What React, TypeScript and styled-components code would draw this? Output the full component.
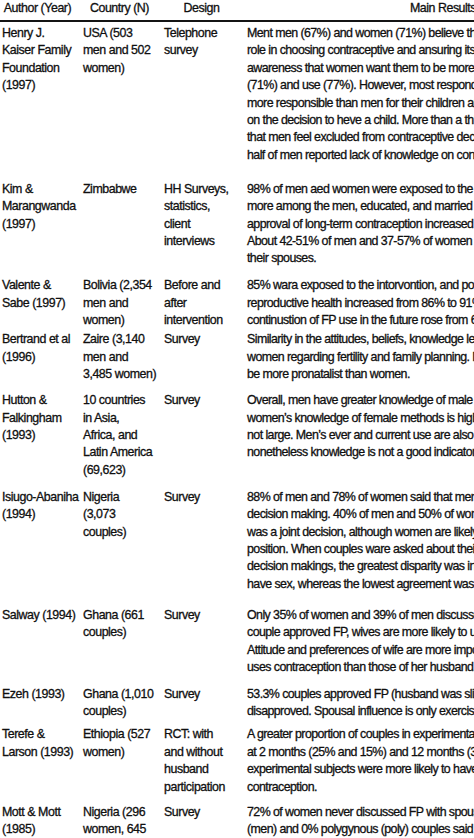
import React from 'react';
import styled, { createGlobalStyle } from 'styled-components';

const GlobalStyle = createGlobalStyle`
  html, body {
    margin: 0;
    padding: 0;
    background: #ffffff;
    overflow: hidden;
  }
  body {
    width: 474px;
    height: 838px;
    font-family: "Liberation Sans", Arial, sans-serif;
    color: #0f0f0f;
  }
`;

const COLUMNS = '83px 81px 83px 400px';

const Page = styled.div`
  width: 474px;
  height: 838px;
  overflow: hidden;
`;

const Table = styled.div`
  width: 647px;
  font-size: 12.4px;
  letter-spacing: -0.45px;
  line-height: 17.4px;
  -webkit-text-stroke: 0.3px #111111;
`;

const HeaderRow = styled.div`
  display: grid;
  grid-template-columns: ${COLUMNS};
  height: 20px;
  border-bottom: 2px solid #141414;
`;

const HeadCell = styled.div`
  padding-right: 8px;
  text-align: center;
  white-space: nowrap;
`;

const Row = styled.div<{ $after: number }>`
  display: grid;
  grid-template-columns: ${COLUMNS};
  padding-bottom: ${p => p.$after}px;
`;

const Body = styled.div`
  padding-top: 3px;
`;

const Cell = styled.div<{ $first?: boolean; $results?: boolean }>`
  padding-left: ${p => (p.$first ? '2px' : '0')};
  letter-spacing: ${p => (p.$results ? '-0.57px' : 'inherit')};
  display: flex;
  flex-direction: column;
`;

const Line = styled.div`
  white-space: nowrap;
`;

interface Study {
  author: string[];
  country: string[];
  design: string[];
  results: string[];
  after: number;
}

const studies: Study[] = [
  {
    author: ['Henry J.', 'Kaiser Family', 'Foundation', '(1997)'],
    country: ['USA (503', 'men and 502', 'women)'],
    design: ['Telephone', 'survey'],
    results: [
      'Ment men (67%) and women (71%) believe the man should play an important',
      'role in choosing contraceptive and ansuring its use. There is a high',
      'awareness that women want them to be more involved in decision making',
      '(71%) and use (77%). However, most respondents believe that women are',
      'more responsible than men for their children and should have final say',
      'on the decision to heve a child. More than a third of respondents believe',
      'that men feel excluded from contraceptive decisions. More than',
      'half of men reported lack of knowledge on contraceptive methods.',
    ],
    after: 16.6,
  },
  {
    author: ['Kim &', 'Marangwanda', '(1997)'],
    country: ['Zimbabwe'],
    design: ['HH Surveys,', 'statistics,', 'client', 'interviews'],
    results: [
      '98% of men aed women were exposed to the campaign; exposure was',
      'more among the men, educated, and married respondents. Men\u2019s',
      'approval of long-term contraception increased after the campaign.',
      'About 42-51% of men and 37-57% of women discussed FP with',
      'their spouses.',
    ],
    after: 9.6,
  },
  {
    author: ['Valente &', 'Sabe (1997)'],
    country: ['Bolivia (2,354', 'men and', 'women)'],
    design: ['Before and', 'after', 'intervention'],
    results: [
      '85% wara exposed to the intorvontion, and positive attitudes toward',
      'reproductive health increased from 86% to 91%. Intention of',
      'continustion of FP use in the future rose from 60% to 70%.',
    ],
    after: 1.6,
  },
  {
    author: ['Bertrand et al', '(1996)'],
    country: ['Zaire (3,140', 'men and', '3,485 women)'],
    design: ['Survey'],
    results: [
      'Similarity in the attitudes, beliefs, knowledge levels of men and',
      'women regarding fertility and family planning. Men tend to',
      'be more pronatalist than women.',
    ],
    after: 8.6,
  },
  {
    author: ['Hutton &', 'Falkingham', '(1993)'],
    country: ['10 countries', 'in Asia,', 'Africa, and', 'Latin America', '(69,623)'],
    design: ['Survey'],
    results: [
      'Overall, men have greater knowledge of male methods, while',
      'women\u2019s knowledge of female methods is higher; the gap is',
      'not large. Men\u2019s ever and current use are also related to knowledge;',
      'nonetheless knowledge is not a good indicator of use.',
    ],
    after: 9.6,
  },
  {
    author: ['Isiugo-Abaniha', '(1994)'],
    country: ['Nigeria', '(3,073', 'couples)'],
    design: ['Survey'],
    results: [
      '88% of men and 78% of women said that men dominate in reproductive',
      'decision making. 40% of men and 50% of women said that FP use',
      'was a joint decision, although women are likely to be in a weaker',
      'position. When couples ware asked about their roles in reproductive',
      'decision makings, the greatest disparity was in the decision to',
      'have sex, whereas the lowest agreement was on family size.',
    ],
    after: 13.6,
  },
  {
    author: ['Salway (1994)'],
    country: ['Ghana (661', 'couples)'],
    design: ['Survey'],
    results: [
      'Only 35% of women and 39% of men discussed FP. Where the',
      'couple approved FP, wives are more likely to use contraception.',
      'Attitude and preferences of wife are more important in whether she',
      'uses contraception than those of her husband.',
    ],
    after: 9.6,
  },
  {
    author: ['Ezeh (1993)'],
    country: ['Ghana (1,010', 'couples)'],
    design: ['Survey'],
    results: [
      '53.3% couples approved FP (husband was slightly more likely to have',
      'disapproved. Spousal influence is only exercised by the husband.',
    ],
    after: 5.6,
  },
  {
    author: ['Terefe &', 'Larson (1993)'],
    country: ['Ethiopia (527', 'women)'],
    design: ['RCT: with', 'and without', 'husband', 'participation'],
    results: [
      'A greater proportion of couples in experimental group used FP',
      'at 2 months (25% and 15%) and 12 months (33% and 26%), and',
      'experimental subjects were more likely to have continued using',
      'contraception.',
    ],
    after: 7.6,
  },
  {
    author: ['Mott & Mott', '(1985)'],
    country: ['Nigeria (296', 'women, 645', 'men)'],
    design: ['Survey'],
    results: [
      '72% of women never discussed FP with spouse; 44% monogamous',
      '(men) and 0% polygynous (poly) couples said they had discussed',
      'family size with their spouses.',
    ],
    after: 9,
  },
];

const renderLines = (lines: string[]) =>
  lines.map((l, i) => <Line key={i}>{l}</Line>);

export default function App() {
  return (
    <Page>
      <GlobalStyle />
      <Table>
        <HeaderRow>
          <HeadCell>Author (Year)</HeadCell>
          <HeadCell>Country (N)</HeadCell>
          <HeadCell>Design</HeadCell>
          <HeadCell>Main Results</HeadCell>
        </HeaderRow>
        <Body>
          {studies.map(s => (
            <Row key={s.author.join(' ')} $after={s.after}>
              <Cell $first>{renderLines(s.author)}</Cell>
              <Cell>{renderLines(s.country)}</Cell>
              <Cell>{renderLines(s.design)}</Cell>
              <Cell $results>{renderLines(s.results)}</Cell>
            </Row>
          ))}
        </Body>
      </Table>
    </Page>
  );
}
